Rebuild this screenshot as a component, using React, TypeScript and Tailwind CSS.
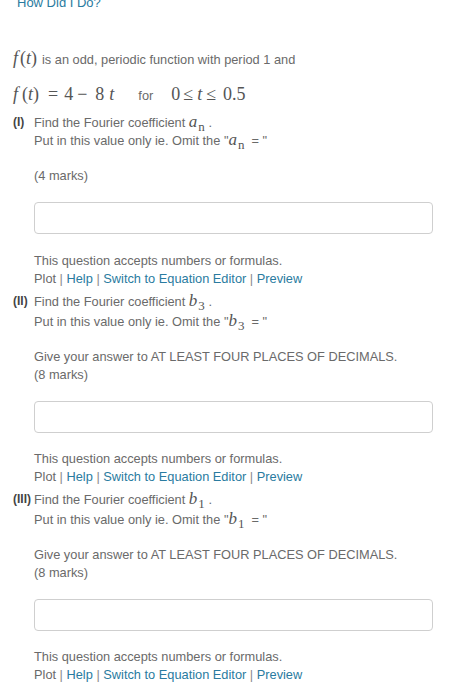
import React from 'react';

const serif = { fontFamily: '"Liberation Serif", "DejaVu Serif", serif' };
const sans = { fontFamily: '"Liberation Sans", Arial, sans-serif' };

const Sub = ({ base, sub }: { base: string; sub: string }) => (
  <span className="text-[#555]" style={serif}>
    <span className="italic text-[17px]">{base}</span>
    <span className="relative top-[4px] ml-[1px] text-[13px]">{sub}</span>
  </span>
);

const Links = ({ first }: { first: boolean }) => (
  <div className={first ? 'mt-[18px] leading-[18px]' : 'mt-[17px] leading-[18px]'}>
    <div>This question accepts numbers or formulas.</div>
    <div>
      Plot <span className="text-[#8a8a8a]">|</span>{' '}
      <span className="text-[#2a7ba0]">Help</span>{' '}
      <span className="text-[#8a8a8a]">|</span>{' '}
      <span className="text-[#2a7ba0]">Switch to Equation Editor</span>{' '}
      <span className="text-[#8a8a8a]">|</span>{' '}
      <span className="text-[#2a7ba0]">Preview</span>
    </div>
  </div>
);

type Q = {
  label: string;
  coef: [string, string];
  decimals: boolean;
  marks: string;
};

const questions: Q[] = [
  { label: '(I)', coef: ['a', 'n'], decimals: false, marks: '(4 marks)' },
  { label: '(II)', coef: ['b', '3'], decimals: true, marks: '(8 marks)' },
  { label: '(III)', coef: ['b', '1'], decimals: true, marks: '(8 marks)' },
];

const Question = ({ q, first }: { q: Q; first: boolean }) => (
  <div className={first ? 'mt-[10px] flex' : 'mt-[4px] flex'}>
    <div className="w-[21px] shrink-0 -ml-[1px] font-bold text-[12px] text-[#444] leading-[18px] whitespace-nowrap">
      {q.label}
    </div>
    <div className="flex-1 min-w-0">
      <div className={first ? 'leading-[18px] h-[18px] whitespace-nowrap' : 'leading-[18px] h-[20px] whitespace-nowrap'}>
        Find the Fourier coefficient <Sub base={q.coef[0]} sub={q.coef[1]} /> .
      </div>
      <div className="leading-[18px] h-[18px] whitespace-nowrap">
        Put in this value only ie. Omit the "<Sub base={q.coef[0]} sub={q.coef[1]} />
        <span className="ml-[7px]">= "</span>
      </div>
      <div className="h-[18px]" />
      {q.decimals && (
        <div className="leading-[18px] whitespace-nowrap">
          Give your answer to AT LEAST FOUR PLACES OF DECIMALS.
        </div>
      )}
      <div className="leading-[18px]">{q.marks}</div>
      <div className="mt-[17px] w-[399px] h-[32px] rounded-[4px] border border-[#cfcfcf] bg-white" />
      <Links first={first} />
    </div>
  </div>
);

export default function App() {
  return (
    <div
      className="w-[456px] h-[700px] overflow-hidden bg-white pl-[14px] text-[12.8px] text-[#6a6a6a]"
      style={sans}
    >
      <div className="-mt-[6px] pl-[3px] text-[13px] leading-[18px] text-[#2a7ba0]">How Did I Do?</div>

      <div className="mt-[37px] leading-[18px] h-[18px] -ml-[1px] whitespace-nowrap">
        <span className="text-[18px] text-[#555]" style={serif}>
          <span className="italic">f</span>
          <span className="ml-[2px]">(</span>
          <span className="italic">t</span>)
        </span>
        <span className="ml-[5px]">is an odd, periodic function with period 1 and</span>
      </div>

      <div
        className="mt-[18px] flex items-baseline h-[18px] leading-[18px] text-[#555] text-[18px] -ml-[1px] whitespace-nowrap"
        style={serif}
      >
        <span className="italic">f</span>
        <span className="ml-[4px]">(</span>
        <span className="italic">t</span>
        <span>)</span>
        <span className="ml-[9px]">=</span>
        <span className="ml-[6px]">4</span>
        <span className="ml-[4px]">−</span>
        <span className="ml-[8px]">8</span>
        <span className="ml-[5px] italic">t</span>
        <span className="ml-[24px] text-[12.8px] text-[#6a6a6a]" style={sans}>
          for
        </span>
        <span className="ml-[18px]">0</span>
        <span className="ml-[3px]">≤</span>
        <span className="ml-[4px] italic">t</span>
        <span className="ml-[4px]">≤</span>
        <span className="ml-[7px]">0.5</span>
      </div>

      {questions.map((q, i) => (
        <Question key={q.label} q={q} first={i === 0} />
      ))}
    </div>
  );
}
